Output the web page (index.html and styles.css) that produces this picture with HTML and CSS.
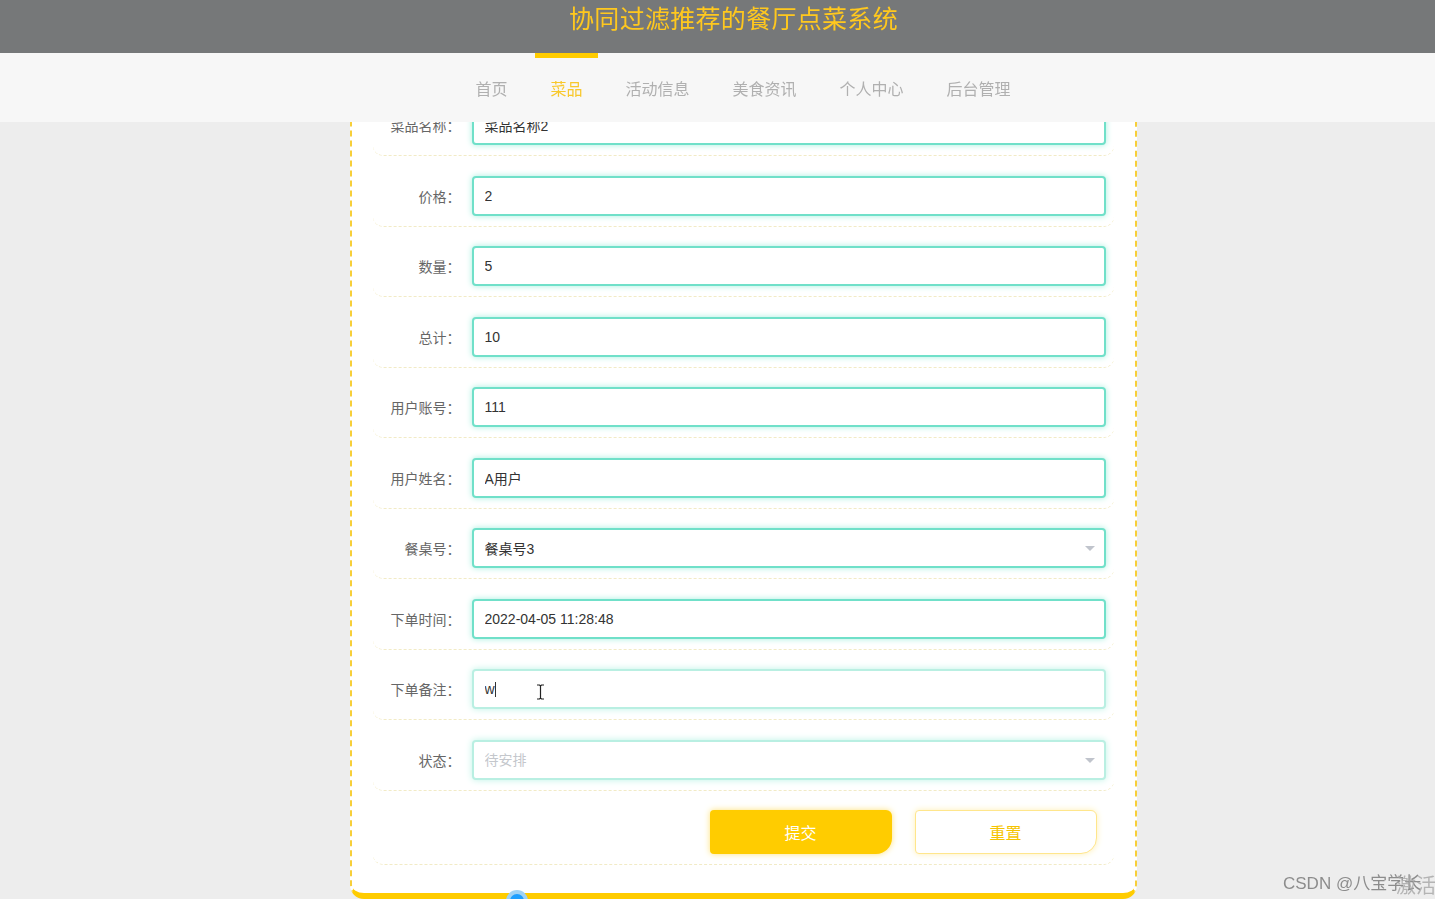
FILE: index.html
```html
<!DOCTYPE html>
<html lang="zh-CN">

<head>
    <meta charset="UTF-8">
    <meta name="viewport" content="width=device-width, initial-scale=1.0">
    <title>协同过滤推荐的餐厅点菜系统</title>
    <link rel="stylesheet" href="styles.css">
</head>

<body>

    <header class="top">
        <div class="title-bar">
            <h1>协同过滤推荐的餐厅点菜系统</h1>
        </div>
        <nav class="nav">
            <ul>
                <li>首页</li>
                <li class="active">菜品</li>
                <li>活动信息</li>
                <li>美食资讯</li>
                <li>个人中心</li>
                <li>后台管理</li>
            </ul>
        </nav>
    </header>

    <main class="page">
        <div class="form-card">
            <form class="order-form">
                <div class="form-row">
                    <label>菜品名称：</label>
                    <div class="field"><input type="text" value="菜品名称2"></div>
                </div>
                <div class="form-row">
                    <label>价格：</label>
                    <div class="field"><input type="text" value="2"></div>
                </div>
                <div class="form-row">
                    <label>数量：</label>
                    <div class="field"><input type="text" value="5"></div>
                </div>
                <div class="form-row">
                    <label>总计：</label>
                    <div class="field"><input type="text" value="10"></div>
                </div>
                <div class="form-row">
                    <label>用户账号：</label>
                    <div class="field"><input type="text" value="111"></div>
                </div>
                <div class="form-row">
                    <label>用户姓名：</label>
                    <div class="field"><input type="text" value="A用户"></div>
                </div>
                <div class="form-row">
                    <label>餐桌号：</label>
                    <div class="field select"><input type="text" value="餐桌号3" readonly><span class="arrow"></span></div>
                </div>
                <div class="form-row">
                    <label>下单时间：</label>
                    <div class="field"><input type="text" value="2022-04-05 11:28:48"></div>
                </div>
                <div class="form-row">
                    <label>下单备注：</label>
                    <div class="field soft">
                        <input type="text" value="w">
                        <span class="caret"></span>
                        <svg class="ibeam" width="9" height="16" viewBox="0 0 9 16">
                            <path d="M1 1h2.5l1 1 1-1H8M4.5 2v12M1 15h2.5l1-1 1 1H8" fill="none" stroke="#222" stroke-width="1.2"/>
                        </svg>
                    </div>
                </div>
                <div class="form-row">
                    <label>状态：</label>
                    <div class="field select soft"><input type="text" placeholder="待安排" readonly><span class="arrow"></span></div>
                </div>
                <div class="form-row actions">
                    <button type="button" class="btn-submit">提交</button>
                    <button type="button" class="btn-reset">重置</button>
                </div>
            </form>
            <span class="dot"></span>
        </div>
    </main>

    <div class="watermark">CSDN @八宝学长<span class="ghost">激活</span></div>

</body>

</html>
```

FILE: styles.css
```css
body {
    margin: 0;
    padding: 0;
    background-color: #ededed;
    font-family: "Liberation Sans", "Noto Sans CJK SC", sans-serif;
    overflow: hidden;
}

.top {
    position: fixed;
    top: 0;
    left: 0;
    right: 0;
    z-index: 10;
}

.title-bar {
    height: 53px;
    background-color: #767879;
    padding-left: 32px;
    text-align: center;
}

.title-bar h1 {
    margin: 0;
    font-family: "Noto Sans CJK SC", sans-serif;
    font-size: 25px;
    font-weight: normal;
    line-height: 35px;
    color: #ffc81e;
    letter-spacing: 0.3px;
}

.nav {
    height: 69px;
    background-color: #f7f7f7;
    padding-left: 51px;
}

.nav ul {
    list-style: none;
    margin: 0;
    padding: 0;
    display: flex;
    justify-content: center;
    gap: 12px;
}

.nav li {
    height: 64px;
    line-height: 61px;
    padding: 0 15.5px;
    border-top: 5px solid transparent;
    font-family: "Noto Sans CJK SC", sans-serif;
    font-size: 16px;
    color: #b0b0b0;
}

.nav li.active {
    border-top-color: #ffcc00;
    color: #f8c82c;
}

.page {
    padding-left: 51px;
}

.form-card {
    position: relative;
    width: 787px;
    box-sizing: border-box;
    margin: 45px auto 0;
    padding: 58px 21px 28px;
    background-color: #fff;
    border: 2px dashed #f7cf3a;
    border-bottom: 6px solid #ffcc00;
    border-radius: 0 0 14px 14px;
}

.form-row {
    display: flex;
    align-items: center;
    padding: 0 8px 10px 0;
    margin-bottom: 19.5px;
    border-bottom: 1px dashed #f2ebc6;
    border-radius: 0 0 10px 10px;
}

.form-row label {
    width: 88px;
    flex-shrink: 0;
    margin-right: 9px;
    text-align: right;
    font-family: "Noto Sans CJK SC", sans-serif;
    font-size: 14px;
    color: #666;
}

.field {
    position: relative;
    flex: 1;
    margin-left: 2px;
}

.field input {
    display: block;
    width: 100%;
    height: 40px;
    box-sizing: border-box;
    padding: 0 11px;
    border: 2px solid #70e0c9;
    border-radius: 4px;
    box-shadow: 0 0 6px #a6efdf;
    font-family: "Liberation Sans", "Noto Sans CJK SC", sans-serif;
    font-size: 14px;
    color: #333;
    background-color: #fff;
    outline: none;
}

.field.soft input {
    border-color: #b9efe2;
    box-shadow: 0 0 7px #bdf3e6;
}

.field input::placeholder {
    color: #c4c7cc;
}

.arrow {
    position: absolute;
    right: 11px;
    top: 18px;
    border-left: 5px solid transparent;
    border-right: 5px solid transparent;
    border-top: 5px solid #c0c4cc;
}

.caret {
    position: absolute;
    left: 23px;
    top: 13px;
    width: 1px;
    height: 15px;
    background-color: #333;
}

.ibeam {
    position: absolute;
    left: 64px;
    top: 15px;
}

.form-row.actions {
    justify-content: flex-end;
    gap: 23px;
    padding-right: 17px;
    margin-bottom: 0;
}

.actions button {
    width: 182px;
    height: 44px;
    border-radius: 4px 6px 16px 4px;
    font-family: "Noto Sans CJK SC", sans-serif;
    font-size: 16px;
    cursor: pointer;
}

.btn-submit {
    background-color: #ffcc00;
    border: none;
    color: #fff;
    box-shadow: 0 0 6px #ffe27a;
}

.btn-reset {
    background-color: #fff;
    border: 1px solid #ffe68c;
    color: #f6c400;
    box-shadow: 0 0 6px #fff0b5;
}

.dot {
    position: absolute;
    left: 158px;
    bottom: -15px;
    width: 14px;
    height: 14px;
    border-radius: 50%;
    background-color: #1e9fff;
    box-shadow: 0 0 0 4px #9fd2f5;
}

.watermark {
    position: fixed;
    left: 1283px;
    top: 869px;
    white-space: nowrap;
    font-family: "Liberation Sans", "Noto Sans CJK SC", sans-serif;
    font-size: 17px;
    color: #8c8c8c;
}

.watermark .ghost {
    position: absolute;
    left: 113px;
    top: 1px;
    font-size: 20px;
    color: #a6a6a6;
    opacity: 0.8;
}
```
